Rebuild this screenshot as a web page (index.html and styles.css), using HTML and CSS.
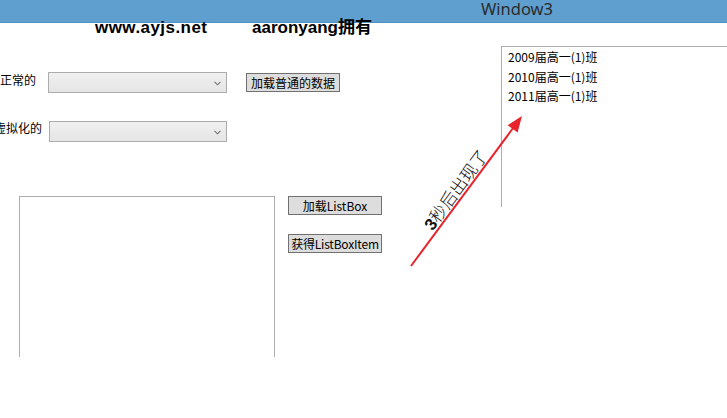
FILE: index.html
```html
<!DOCTYPE html>
<html lang="zh-CN">
<head>
<meta charset="utf-8">
<title>Window3</title>
<link rel="stylesheet" href="styles.css">
</head>
<body>
<div class="window">
  <div class="titlebar"><span class="title">Window3</span></div>
  <div class="client">
    <div class="left">
      <div class="brand"><span class="site">www.ayjs.net</span><span class="owner">aaronyang拥有</span></div>
      <div class="row row1">
        <span class="label l1">正常的</span>
        <div class="combo c1"><svg class="chev" width="7" height="5" viewBox="0 0 7 5"><polyline points="0.5,0.8 3.5,3.8 6.5,0.8" fill="none" stroke="#707070" stroke-width="1.1"/></svg></div>
        <button class="btn b1">加载普通的数据</button>
      </div>
      <div class="row row2">
        <span class="label l2">虚拟化的</span>
        <div class="combo c2"><svg class="chev" width="7" height="5" viewBox="0 0 7 5"><polyline points="0.5,0.8 3.5,3.8 6.5,0.8" fill="none" stroke="#707070" stroke-width="1.1"/></svg></div>
      </div>
      <div class="lower">
        <div class="listbox lb-left"></div>
        <div class="btn-col">
          <button class="btn b2">加载ListBox</button>
          <button class="btn b3">获得ListBoxItem</button>
        </div>
      </div>
    </div>
    <div class="right">
      <div class="listbox lb-right">
        <div class="item">2009届高一(1)班</div>
        <div class="item">2010届高一(1)班</div>
        <div class="item">2011届高一(1)班</div>
      </div>
    </div>
  </div>
  <svg class="arrow" width="727" height="418" viewBox="0 0 727 418">
    <line x1="411" y1="266" x2="513.5" y2="127.5" stroke="#e8232b" stroke-width="2"/>
    <polygon points="522,116 517.6,132.6 507.6,125.2" fill="#e8232b"/>
  </svg>
  <div class="note"><span class="num">3</span>秒后出现了</div>
</div>
</body>
</html>
```

FILE: styles.css
```css
* { box-sizing: border-box; }
html, body { margin: 0; padding: 0; }
body {
  width: 727px;
  height: 418px;
  overflow: hidden;
  background: #ffffff;
  font-family: "Noto Sans CJK SC", "Noto Sans", sans-serif;
  font-size: 12px;
  color: #000;
}
.window {
  position: relative;
  width: 727px;
  height: 418px;
  overflow: hidden;
}
.titlebar {
  height: 23px;
  background: #5f9fcf;
  border-bottom: 1px solid #5490be;
  padding-left: 481px;
  display: flex;
  align-items: flex-start;
}
.title {
  font-family: "Noto Sans", "Open Sans", sans-serif;
  font-size: 16.5px;
  line-height: 17px;
  color: #2b2b2b;
  display: block;
}
.client {
  display: flex;
}
.left {
  width: 501px;
  flex: none;
  display: flex;
  flex-direction: column;
}
.brand {
  display: flex;
  height: 17px;
  margin-top: -4px;
  padding-left: 95px;
  font-family: "Liberation Sans", "Noto Sans CJK SC", sans-serif;
  font-weight: bold;
  font-size: 17px;
  line-height: 17px;
  white-space: nowrap;
}
.site { width: 157px; letter-spacing: 0.45px; }
.row {
  display: flex;
  align-items: flex-start;
  height: 21px;
}
.row1 { margin-top: 36px; }
.row2 { margin-top: 28px; }
.label {
  line-height: 16px;
  white-space: nowrap;
}
.l1 { width: 48px; }
.l2 { width: 55px; margin-left: -6px; line-height: 14px; }
.combo {
  height: 21px;
  border: 1px solid #acacac;
  background: linear-gradient(#f0f0f0, #e5e5e5);
  display: flex;
  align-items: center;
  justify-content: flex-end;
  padding-right: 5px;
}
.c1 { width: 179px; }
.c2 { width: 178px; }
.chev { display: block; margin-top: 1px; }
.btn {
  font-family: "Noto Sans CJK SC", "Noto Sans", sans-serif;
  font-size: 12px;
  color: #000;
  background: #dddddd;
  border: 1px solid #707070;
  border-radius: 0;
  padding: 0;
  margin: 0;
  height: 19px;
  line-height: 16px;
  width: 94px;
  white-space: nowrap;
  overflow: hidden;
  text-align: center;
}
.b1 { margin-left: 19px; margin-top: 1px; }
.lower {
  display: flex;
  margin-top: 54px;
}
.listbox {
  border: 1px solid #abadb3;
  border-bottom: none;
  background: #fff;
  height: 161px;
}
.lb-left {
  margin-left: 19px;
  width: 256px;
}
.btn-col {
  display: flex;
  flex-direction: column;
  gap: 19px;
  margin-left: 13px;
}
.b3 { letter-spacing: -0.2px; }
.right {
  flex: none;
  padding-top: 23px;
}
.lb-right {
  width: 240px;
  padding: 1px;
}
.item {
  height: 19.5px;
  line-height: 18px;
  padding-left: 5px;
  white-space: nowrap;
}
.arrow {
  position: absolute;
  left: 0;
  top: 0;
  pointer-events: none;
}
.note {
  position: absolute;
  left: 456px;
  top: 190px;
  transform: translate(-50%, -50%) rotate(-53.5deg);
  font-family: "Noto Sans CJK SC", sans-serif;
  font-weight: 300;
  font-size: 17px;
  line-height: 20px;
  white-space: nowrap;
  color: #111;
}
.num {
  font-family: "Liberation Sans", sans-serif;
  font-weight: bold;
}
```
